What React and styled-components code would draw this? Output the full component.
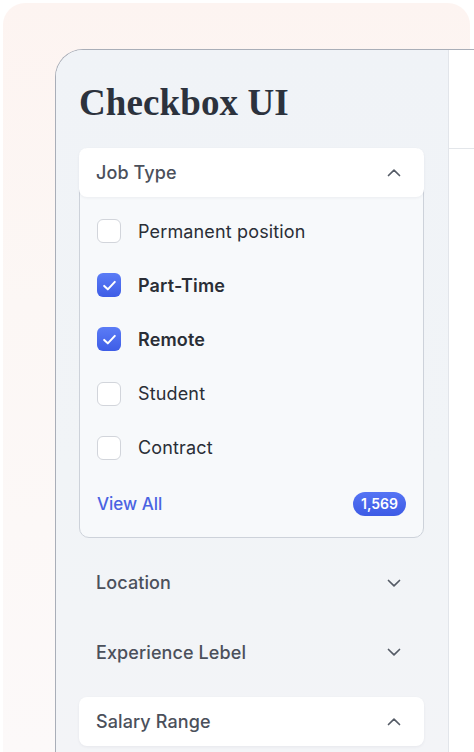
import React from 'react';
import styled, { createGlobalStyle } from 'styled-components';

const GlobalStyle = createGlobalStyle`
  html, body {
    margin: 0;
    padding: 0;
    background: #ffffff;
  }

  body {
    font-family: Inter, "Noto Sans", sans-serif;
    -webkit-font-smoothing: antialiased;
  }
`;

const Page = styled.div`
  width: 474px;
  height: 752px;
  overflow: hidden;
  padding: 3px 4px 0 3px;
  box-sizing: border-box;
`;

const Backdrop = styled.div`
  height: 100%;
  border-radius: 22px 22px 0 0;
  background: linear-gradient(180deg, #fdf4f1 0%, #fcf7f5 40%, #fcf9f9 100%);
  padding-top: 46px;
  padding-left: 52px;
  box-sizing: border-box;
`;

const Panel = styled.div`
  display: flex;
  height: 100%;
  margin-right: -4px;
  border-top: 1px solid #a9aeb8;
  border-left: 1px solid #a9aeb8;
  border-top-left-radius: 28px;
  overflow: hidden;
  background: #ffffff;
`;

const Sidebar = styled.aside`
  width: 393px;
  flex-shrink: 0;
  padding: 0 24px 0 23px;
  box-sizing: border-box;
  background: linear-gradient(180deg, #f0f3f7 0%, #f1f4f7 60%, #f3f4f7 100%);
  border-right: 1px solid #e2e5ea;
`;

const Main = styled.main`
  flex: 1;
  background: #ffffff;
`;

const MainHeader = styled.div`
  height: 98px;
  border-bottom: 1px solid #e3e6ea;
`;

const Title = styled.h1`
  margin: 31px 0 23px;
  font-family: "Liberation Serif", "DejaVu Serif", serif;
  font-weight: 700;
  font-size: 37px;
  line-height: 44px;
  color: #2c323d;
  letter-spacing: 0.1px;
`;

const Sections = styled.div`
  display: flex;
  flex-direction: column;
  gap: 20.5px;
`;

const Group = styled.div`
  border: 1px solid #cdd2da;
  border-radius: 10px;
  background: #f7f9fb;
  padding-bottom: 21px;
`;

const SectionHeader = styled.div`
  display: flex;
  align-items: center;
  justify-content: space-between;
  height: 49px;
  padding: 0 22px 0 17px;
  box-sizing: border-box;
  border-radius: 8px;
  background: ${(p) => (p.$card ? '#ffffff' : 'transparent')};
  box-shadow: ${(p) => (p.$card ? '0 1px 3px rgba(30, 40, 60, 0.06)' : 'none')};
  margin: ${(p) => (p.$inGroup ? '-1px -1px 0' : '0')};
`;

const SectionTitle = styled.span`
  font-size: 18px;
  font-weight: 500;
  color: #4b505b;
  letter-spacing: 0.1px;
`;

const List = styled.ul`
  list-style: none;
  margin: 0;
  padding: 7px 17px 0;
`;

const Row = styled.li`
  display: flex;
  align-items: center;
  height: 54.2px;
  gap: 17px;
`;

const Box = styled.span`
  display: flex;
  align-items: center;
  justify-content: center;
  width: 24px;
  height: 24px;
  box-sizing: border-box;
  border-radius: 6px;
  border: ${(p) => (p.$checked ? 'none' : '1.5px solid #d2d5db')};
  background: ${(p) =>
    p.$checked ? 'linear-gradient(180deg, #5b7cf6 0%, #3e5de6 100%)' : '#ffffff'};
`;

const Label = styled.span`
  font-size: 18px;
  font-weight: ${(p) => (p.$checked ? 600 : 400)};
  color: #2a2e36;
  letter-spacing: 0.15px;
`;

const Footer = styled.div`
  display: flex;
  align-items: center;
  justify-content: space-between;
  margin-top: 17px;
  padding: 0 17px;
  height: 24px;
`;

const ViewAll = styled.a`
  font-size: 17px;
  font-weight: 500;
  color: #4a63e2;
  text-decoration: none;
`;

const Badge = styled.span`
  display: inline-flex;
  align-items: center;
  height: 24px;
  padding: 0 8px;
  border-radius: 12px;
  background: linear-gradient(180deg, #5574f4 0%, #3d5be5 100%);
  color: #ffffff;
  font-size: 14px;
  font-weight: 600;
`;

const Chevron = ({ up }) => (
  <svg width="16" height="16" viewBox="0 0 16 16" fill="none">
    <path
      d={up ? 'M2.5 10.5 L8 5.2 L13.5 10.5' : 'M2.5 5.5 L8 10.8 L13.5 5.5'}
      stroke="#555b66"
      strokeWidth="1.7"
      strokeLinecap="round"
      strokeLinejoin="round"
    />
  </svg>
);

const Check = () => (
  <svg width="17" height="17" viewBox="0 0 16 16" fill="none">
    <path
      d="M3 8.4 L6.4 11.6 L13 4.6"
      stroke="#ffffff"
      strokeWidth="1.9"
      strokeLinecap="round"
      strokeLinejoin="round"
    />
  </svg>
);

const jobTypes = [
  { label: 'Permanent position', checked: false },
  { label: 'Part-Time', checked: true },
  { label: 'Remote', checked: true },
  { label: 'Student', checked: false },
  { label: 'Contract', checked: false },
];

const App = () => (
  <>
    <GlobalStyle />
    <Page>
      <Backdrop>
        <Panel>
          <Sidebar>
            <Title>Checkbox UI</Title>
            <Sections>
              <Group>
                <SectionHeader $card $inGroup>
                  <SectionTitle>Job Type</SectionTitle>
                  <Chevron up />
                </SectionHeader>
                <List>
                  {jobTypes.map((item) => (
                    <Row key={item.label}>
                      <Box $checked={item.checked}>{item.checked && <Check />}</Box>
                      <Label $checked={item.checked}>{item.label}</Label>
                    </Row>
                  ))}
                </List>
                <Footer>
                  <ViewAll href="#">View All</ViewAll>
                  <Badge>1,569</Badge>
                </Footer>
              </Group>
              <SectionHeader>
                <SectionTitle>Location</SectionTitle>
                <Chevron />
              </SectionHeader>
              <SectionHeader>
                <SectionTitle>Experience Lebel</SectionTitle>
                <Chevron />
              </SectionHeader>
              <SectionHeader $card>
                <SectionTitle>Salary Range</SectionTitle>
                <Chevron up />
              </SectionHeader>
            </Sections>
          </Sidebar>
          <Main>
            <MainHeader />
          </Main>
        </Panel>
      </Backdrop>
    </Page>
  </>
);

export default App;
